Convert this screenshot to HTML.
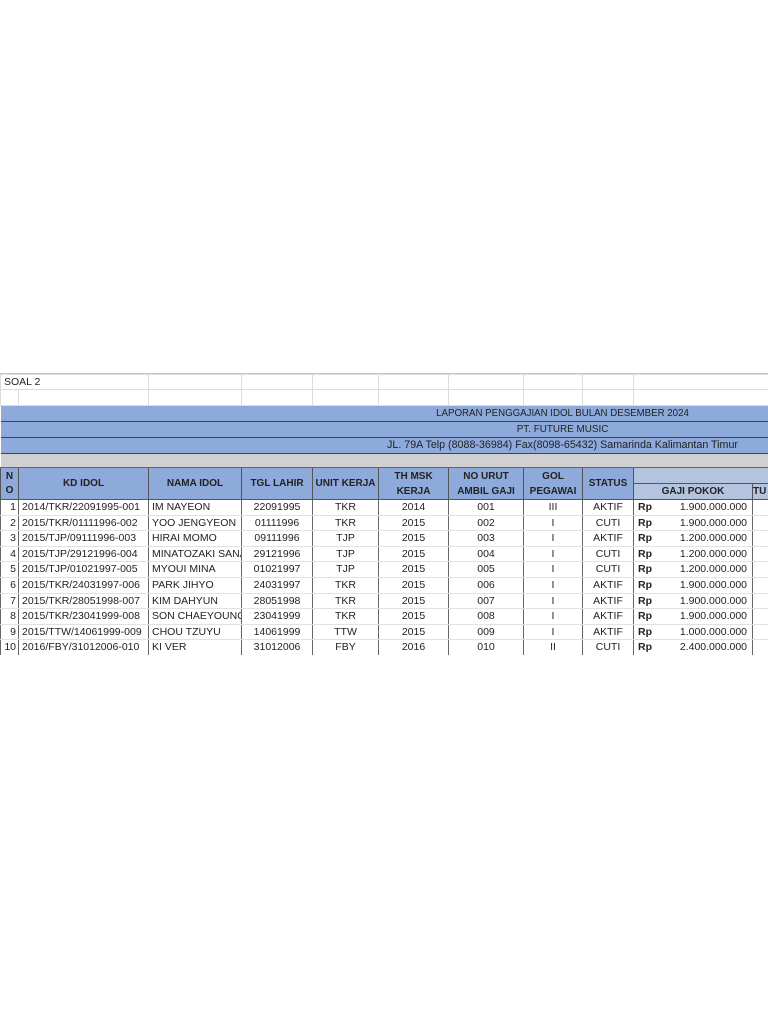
<!DOCTYPE html>
<html><head><meta charset="utf-8"><style>
body{margin:0;width:768px;height:1024px;background:#fff;position:relative;overflow:hidden;font-family:"Liberation Sans",sans-serif;}
#w{position:absolute;left:0;top:373px;width:768px;height:281px;overflow:hidden;border-top:1px solid #c8c8c8;}
table{border-collapse:collapse;table-layout:fixed;width:768px;font-size:10.5px;color:#222;}
td{padding:0;white-space:nowrap;overflow:hidden;line-height:1;}
.g td{border:1px solid #dcdcdc;}
.t td{background:#8eaadb;border-top:1px solid #444;border-bottom:1px solid #444;text-align:center;padding-left:356px;}
.gr td{background:#d0d0d0;border-bottom:1px solid #666;}
.h td{background:#8eaadb;font-weight:bold;text-align:center;border:1px solid #555;font-size:10px;}
.h td.lt{background:#b4c3de;}
.d td{border-left:1px solid #666;border-right:1px solid #666;border-bottom:1px solid #e2e2e2;text-align:center;height:14.6px;}
.d td.l{text-align:left;padding-left:3px;}
.d td.r{text-align:right;padding-right:2px;}
.d td.rp{border-right:none;text-align:left;padding-left:4px;font-weight:bold;width:auto;}
.d td.am{border-left:none;text-align:right;padding-right:5px;}
.bl{border-left:1.5px solid #111 !important;}
</style></head><body>
<div id="w"><table>
<colgroup><col style="width:18px"><col style="width:130px"><col style="width:93px"><col style="width:71px"><col style="width:66px"><col style="width:70px"><col style="width:75px"><col style="width:59px"><col style="width:51px"><col style="width:22px"><col style="width:97px"><col style="width:16px"></colgroup>
<tr class="g" style="height:15px"><td colspan="2" style="padding-left:3px">SOAL 2</td><td></td><td></td><td></td><td></td><td></td><td></td><td></td><td colspan="3"></td></tr>
<tr class="g" style="height:16px"><td></td><td></td><td></td><td></td><td></td><td></td><td></td><td></td><td></td><td colspan="3"></td></tr>
<tr class="t" style="height:16px"><td colspan="12" style="font-size:9.7px">LAPORAN PENGGAJIAN IDOL BULAN DESEMBER 2024</td></tr>
<tr class="t" style="height:16px"><td colspan="12" style="font-size:9.9px">PT. FUTURE MUSIC</td></tr>
<tr class="t" style="height:16px"><td colspan="12" style="font-size:10.7px">JL. 79A Telp (8088-36984) Fax(8098-65432) Samarinda Kalimantan Timur</td></tr>
<tr class="gr" style="height:14px"><td colspan="12"></td></tr>
<tr class="h" style="height:16px"><td rowspan="2" style="line-height:1.4">N<br>O</td><td rowspan="2">KD IDOL</td><td rowspan="2">NAMA IDOL</td><td rowspan="2">TGL LAHIR</td><td rowspan="2">UNIT KERJA</td><td rowspan="2" style="line-height:1.5">TH MSK<br>KERJA</td><td rowspan="2" style="line-height:1.5">NO URUT<br>AMBIL GAJI</td><td rowspan="2" class="bl" style="line-height:1.5">GOL<br>PEGAWAI</td><td rowspan="2">STATUS</td><td colspan="3" class="lt"></td></tr>
<tr class="h" style="height:16px"><td colspan="2" class="lt">GAJI POKOK</td><td class="lt" style="text-align:left">TU</td></tr>
<tr class="d"><td class="r">1</td><td class="l">2014/TKR/22091995-001</td><td class="l">IM NAYEON</td><td>22091995</td><td>TKR</td><td>2014</td><td>001</td><td class="bl">III</td><td>AKTIF</td><td class="rp">Rp</td><td class="am">1.900.000.000</td><td></td></tr>
<tr class="d"><td class="r">2</td><td class="l">2015/TKR/01111996-002</td><td class="l">YOO JENGYEON</td><td>01111996</td><td>TKR</td><td>2015</td><td>002</td><td class="bl">I</td><td>CUTI</td><td class="rp">Rp</td><td class="am">1.900.000.000</td><td></td></tr>
<tr class="d"><td class="r">3</td><td class="l">2015/TJP/09111996-003</td><td class="l">HIRAI MOMO</td><td>09111996</td><td>TJP</td><td>2015</td><td>003</td><td class="bl">I</td><td>AKTIF</td><td class="rp">Rp</td><td class="am">1.200.000.000</td><td></td></tr>
<tr class="d"><td class="r">4</td><td class="l">2015/TJP/29121996-004</td><td class="l">MINATOZAKI SANA</td><td>29121996</td><td>TJP</td><td>2015</td><td>004</td><td class="bl">I</td><td>CUTI</td><td class="rp">Rp</td><td class="am">1.200.000.000</td><td></td></tr>
<tr class="d"><td class="r">5</td><td class="l">2015/TJP/01021997-005</td><td class="l">MYOUI MINA</td><td>01021997</td><td>TJP</td><td>2015</td><td>005</td><td class="bl">I</td><td>CUTI</td><td class="rp">Rp</td><td class="am">1.200.000.000</td><td></td></tr>
<tr class="d"><td class="r">6</td><td class="l">2015/TKR/24031997-006</td><td class="l">PARK JIHYO</td><td>24031997</td><td>TKR</td><td>2015</td><td>006</td><td class="bl">I</td><td>AKTIF</td><td class="rp">Rp</td><td class="am">1.900.000.000</td><td></td></tr>
<tr class="d"><td class="r">7</td><td class="l">2015/TKR/28051998-007</td><td class="l">KIM DAHYUN</td><td>28051998</td><td>TKR</td><td>2015</td><td>007</td><td class="bl">I</td><td>AKTIF</td><td class="rp">Rp</td><td class="am">1.900.000.000</td><td></td></tr>
<tr class="d"><td class="r">8</td><td class="l">2015/TKR/23041999-008</td><td class="l">SON CHAEYOUNG</td><td>23041999</td><td>TKR</td><td>2015</td><td>008</td><td class="bl">I</td><td>AKTIF</td><td class="rp">Rp</td><td class="am">1.900.000.000</td><td></td></tr>
<tr class="d"><td class="r">9</td><td class="l">2015/TTW/14061999-009</td><td class="l">CHOU TZUYU</td><td>14061999</td><td>TTW</td><td>2015</td><td>009</td><td class="bl">I</td><td>AKTIF</td><td class="rp">Rp</td><td class="am">1.000.000.000</td><td></td></tr>
<tr class="d"><td class="r">10</td><td class="l">2016/FBY/31012006-010</td><td class="l">KI VER</td><td>31012006</td><td>FBY</td><td>2016</td><td>010</td><td class="bl">II</td><td>CUTI</td><td class="rp">Rp</td><td class="am">2.400.000.000</td><td></td></tr>
</table></div>
</body></html>
